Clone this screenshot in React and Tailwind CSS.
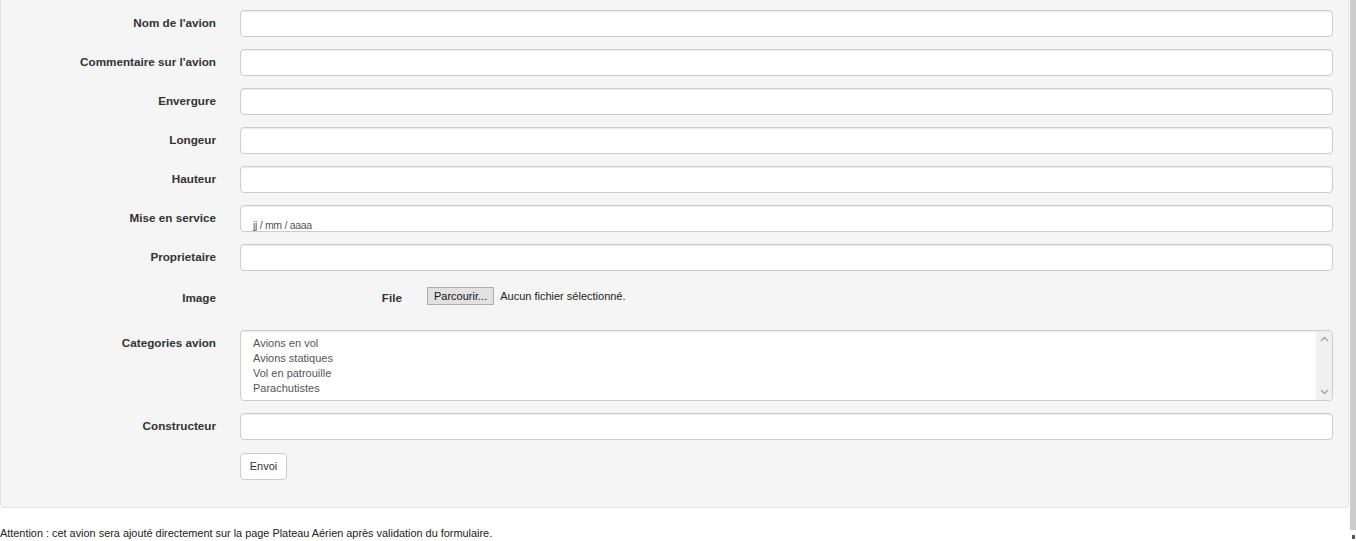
import React from "react";

const labelCls = "w-[215px] shrink-0 text-right font-bold text-[11.7px] text-[#333]";
const inputCls = "flex-1 h-[27px] bg-white border border-[#cccccc] rounded-[4px] shadow-[inset_0_1px_1px_rgba(0,0,0,0.075)]";

function Row({ label, children, top = false }) {
  return (
    <div className={"flex gap-[24px] " + (top ? "items-start" : "items-center")}>
      <div className={labelCls + (top ? " pt-[4px]" : " pb-[1px]")}>{label}</div>
      {children}
    </div>
  );
}

export default function App() {
  return (
    <div className="flex w-[1356px] h-[541px] overflow-hidden bg-white" style={{ fontFamily: '"Liberation Sans", Arial, sans-serif' }}>
      <div className="flex-1 flex flex-col">
        <div className="w-[1349px] bg-[#f5f5f5] border-x border-b border-[#e3e3e3] rounded-b-[4px] pt-[10px] pr-[15px] pb-[27px] flex flex-col">
          <div className="flex flex-col gap-[12px]">
            <Row label="Nom de l'avion"><div className={inputCls} /></Row>
            <Row label="Commentaire sur l'avion"><div className={inputCls} /></Row>
            <Row label="Envergure"><div className={inputCls} /></Row>
            <Row label="Longeur"><div className={inputCls} /></Row>
            <Row label="Hauteur"><div className={inputCls} /></Row>
            <Row label="Mise en service">
              <div className={inputCls + " pl-[12px] pt-[14px] text-[10.5px] text-[#555] leading-none tracking-[-0.3px]"}>jj / mm / aaaa</div>
            </Row>
            <Row label="Proprietaire"><div className={inputCls} /></Row>
            <div className="flex items-start gap-[24px] h-[35px]">
              <div className={labelCls + " pt-[6px]"}>Image</div>
              <div className="flex items-start gap-[25px]">
                <div className="w-[162px] text-right font-bold text-[11.7px] text-[#333] pt-[6px]">File</div>
                <div className="flex items-center gap-[6px] pt-[4px]">
                  <div className="h-[18px] px-[6px] flex items-center bg-[#e1e1e1] border border-[#adadad] text-[11px] text-[#111]">Parcourir...</div>
                  <div className="text-[11px] text-[#222]">Aucun fichier sélectionné.</div>
                </div>
              </div>
            </div>
            <Row label="Categories avion" top>
              <div className={inputCls.replace("h-[27px]", "h-[71px]") + " flex overflow-hidden"}>
                <div className="flex-1 pl-[12px] pt-[5px] text-[11px] text-[#555] leading-[15px]">
                  <div>Avions en vol</div>
                  <div>Avions statiques</div>
                  <div>Vol en patrouille</div>
                  <div>Parachutistes</div>
                </div>
                <div className="w-[16px] bg-[#f0f0f0] flex flex-col justify-between items-center py-[5px]">
                  <svg width="9" height="6" viewBox="0 0 9 6"><path d="M1 5 L4.5 1.5 L8 5" fill="none" stroke="#a3a3a3" strokeWidth="1.3" /></svg>
                  <svg width="9" height="6" viewBox="0 0 9 6"><path d="M1 1 L4.5 4.5 L8 1" fill="none" stroke="#a3a3a3" strokeWidth="1.3" /></svg>
                </div>
              </div>
            </Row>
            <Row label="Constructeur"><div className={inputCls} /></Row>
            <div className="flex gap-[24px] pt-[1px]">
              <div className="w-[215px] shrink-0" />
              <div className="h-[27px] w-[47px] bg-white border border-[#cccccc] rounded-[4px] flex items-center justify-center text-[11px] text-[#333]">Envoi</div>
            </div>
          </div>
        </div>
        <div className="mt-[18px] text-[10.9px] text-[#222] leading-[14px]">
          Attention : cet avion sera ajouté directement sur la page Plateau Aérien après validation du formulaire.
        </div>
      </div>
      <div className="w-[6px] flex flex-col">
        <div className="h-[530px] bg-[#cdcdcd]" />
        <div className="flex-1 bg-white flex items-end justify-center pb-[2px]">
          <div className="w-[3px] h-[4px] bg-[#555]" />
        </div>
      </div>
    </div>
  );
}
